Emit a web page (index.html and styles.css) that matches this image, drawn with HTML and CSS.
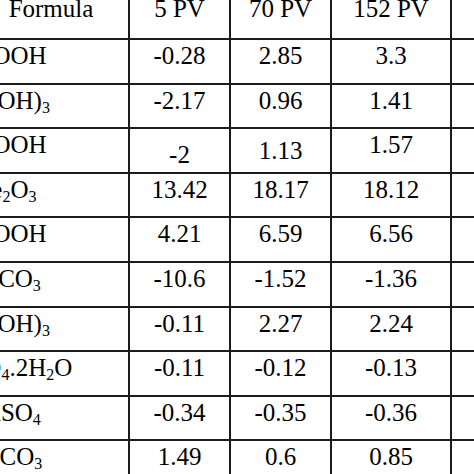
FILE: index.html
```html
<!DOCTYPE html>
<html>
<head>
<meta charset="utf-8">
<link rel="stylesheet" href="styles.css">
</head>
<body>
<div class="sheet">
  <div class="cell head formula">Formula</div>
  <div class="cell head">5 PV</div>
  <div class="cell head">70 PV</div>
  <div class="cell head">152 PV</div>
  <div class="cell head"></div>

  <div class="cell">FeOOH</div>
  <div class="cell">-0.28</div>
  <div class="cell">2.85</div>
  <div class="cell">3.3</div>
  <div class="cell"></div>

  <div class="cell">Fe(OH)<sub>3</sub></div>
  <div class="cell">-2.17</div>
  <div class="cell">0.96</div>
  <div class="cell">1.41</div>
  <div class="cell"></div>

  <div class="cell">AlOOH</div>
  <div class="cell low-more">-2</div>
  <div class="cell low">1.13</div>
  <div class="cell">1.57</div>
  <div class="cell"></div>

  <div class="cell">Fe<sub>2</sub>O<sub>3</sub></div>
  <div class="cell">13.42</div>
  <div class="cell">18.17</div>
  <div class="cell">18.12</div>
  <div class="cell"></div>

  <div class="cell">AlOOH</div>
  <div class="cell">4.21</div>
  <div class="cell">6.59</div>
  <div class="cell">6.56</div>
  <div class="cell"></div>

  <div class="cell">FeCO<sub>3</sub></div>
  <div class="cell">-10.6</div>
  <div class="cell">-1.52</div>
  <div class="cell">-1.36</div>
  <div class="cell"></div>

  <div class="cell">Al(OH)<sub>3</sub></div>
  <div class="cell">-0.11</div>
  <div class="cell">2.27</div>
  <div class="cell">2.24</div>
  <div class="cell"></div>

  <div class="cell">CaSO<sub>4</sub>.2H<sub>2</sub>O</div>
  <div class="cell">-0.11</div>
  <div class="cell">-0.12</div>
  <div class="cell">-0.13</div>
  <div class="cell"></div>

  <div class="cell">CaSO<sub>4</sub></div>
  <div class="cell">-0.34</div>
  <div class="cell">-0.35</div>
  <div class="cell">-0.36</div>
  <div class="cell"></div>

  <div class="cell">CaCO<sub>3</sub></div>
  <div class="cell">1.49</div>
  <div class="cell">0.6</div>
  <div class="cell">0.85</div>
  <div class="cell"></div>
</div>
</body>
</html>
```

FILE: styles.css
```css
html, body {
  margin: 0;
  padding: 0;
  background: #ffffff;
  overflow: hidden;
}

.sheet {
  display: grid;
  grid-template-columns: 244px 101px 101px 120px 120px;
  grid-template-rows: 45px repeat(10, 44.6px);
  margin-top: -5px;
  margin-left: -114px;
  width: max-content;
  font-family: "Liberation Serif", "Times New Roman", serif;
  font-size: 25px;
  line-height: 28px;
  color: #000;
}

.cell {
  box-sizing: border-box;
  border-right: 2px solid #1c1c1c;
  border-bottom: 2px solid #1c1c1c;
  padding-top: 2px;
  text-align: center;
  white-space: nowrap;
}

.cell sub {
  font-size: 16px;
  line-height: 0;
  vertical-align: -4px;
}

.head {
  padding-top: 0;
}

.formula {
  padding-left: 88px;
}

.low {
  padding-top: 8px;
}

.low-more {
  padding-top: 12px;
}
```
